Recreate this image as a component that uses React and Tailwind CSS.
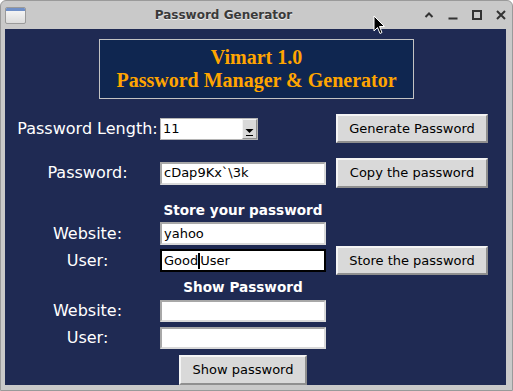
import React from "react";

const F = { fontFamily: '"DejaVu Sans", sans-serif' };

function Btn({ children, w = "w-[152px]", h = "h-[29px]" }) {
  return (
    <div
      className={`${w} ${h} bg-[#d9d9d9] border-2 border-t-[#f4f4f4] border-l-[#f4f4f4] border-r-[#8f8f8f] border-b-[#8f8f8f] flex items-center justify-center text-[13px] text-black`}
      style={F}
    >
      {children}
    </div>
  );
}

function Entry({ children, focused }) {
  return (
    <div
      className={`w-[166px] h-full bg-white flex items-center pl-[2px] text-[13px] text-black ${
        focused
          ? "border-2 border-black"
          : "border-2 border-t-[#a8a8a8] border-l-[#a8a8a8] border-r-[#d9d9d9] border-b-[#d9d9d9]"
      }`}
      style={F}
    >
      {children}
    </div>
  );
}

function Label({ children }) {
  return (
    <div className="w-[145px] flex justify-center text-[16px] text-white leading-none" style={F}>
      {children}
    </div>
  );
}

export default function App() {
  return (
    <div className="relative w-[513px] h-[391px] bg-[#c9c9c9] overflow-hidden flex flex-col rounded-t-[6px] border border-[#9a9a9a]">
      {/* title bar */}
      <div className="h-[28px] flex items-center shrink-0 relative">
        <div className="ml-[4px] w-[21px] h-[17px] mt-[1px] rounded-[2px] border border-[#9a9a9a] bg-gradient-to-b from-[#fafafa] to-[#dcdcdc] flex flex-col overflow-hidden">
          <div className="h-[3px] bg-[#6f8fc7]" />
        </div>
        <div className="w-[395px] flex justify-center">
          <span
            className="text-[12px] font-bold text-[#3a3a3a] [text-shadow:0_1px_0_rgba(255,255,255,0.7)]"
            style={F}
          >
            Password Generator
          </span>
        </div>
        <div className="flex items-center gap-[14px] ml-[3px]">
          <svg width="10" height="10" viewBox="0 0 10 10">
            <path d="M1.5 7 L5 3.5 L8.5 7" fill="none" stroke="#333" strokeWidth="2" />
          </svg>
          <svg width="10" height="10" viewBox="0 0 10 10">
            <path d="M0.5 8.5 H9.5" fill="none" stroke="#333" strokeWidth="2" />
          </svg>
          <svg width="10" height="10" viewBox="0 0 10 10">
            <rect x="1" y="1" width="8" height="8" fill="none" stroke="#333" strokeWidth="2" />
          </svg>
          <svg width="10" height="10" viewBox="0 0 10 10">
            <path d="M1 1 L9 9 M9 1 L1 9" fill="none" stroke="#333" strokeWidth="2" />
          </svg>
        </div>
      </div>

      {/* body */}
      <div className="flex-1 flex pl-[4px] pr-[6px] pb-[5px]">
        <div className="flex-1 bg-[#1f2a53] flex flex-col pl-[10px]">
          {/* header */}
          <div className="mt-[10px] ml-[84px] w-[315px] h-[60px] bg-[#0f2650] border border-[#c3c3c3] flex flex-col items-center justify-center">
            <div
              className="text-[20px] leading-[23px] font-bold text-[#ffa500]"
              style={{ fontFamily: '"Liberation Serif", serif' }}
            >
              Vimart 1.0
            </div>
            <div
              className="text-[20px] leading-[23px] font-bold text-[#ffa500]"
              style={{ fontFamily: '"Liberation Serif", serif' }}
            >
              Password Manager &amp; Generator
            </div>
          </div>

          {/* row 1 */}
          <div className="mt-[15px] h-[29px] flex items-center">
            <Label>Password Length:</Label>
            <div className="w-[166px] flex items-center">
              <div className="w-[98px] h-[22px] bg-white border border-[#b5b5b5] flex">
                <div className="flex-1 flex items-center pl-[2px] text-[13px] text-black" style={F}>
                  11
                </div>
                <div className="w-[15px] h-full bg-[#d9d9d9] border-l border-t border-t-[#f4f4f4] border-l-[#f4f4f4] border-r border-b border-r-[#8f8f8f] border-b-[#8f8f8f] flex items-end justify-center pb-[2px]">
                  <svg width="9" height="8" viewBox="0 0 9 8">
                    <path d="M0.5 1 H8.5 L4.5 5 Z" fill="#000" />
                    <path d="M1 7.5 H8" stroke="#000" strokeWidth="1" />
                  </svg>
                </div>
              </div>
            </div>
            <div className="ml-[10px]">
              <Btn>Generate Password</Btn>
            </div>
          </div>

          {/* row 2 */}
          <div className="mt-[15px] h-[30px] flex items-center">
            <Label>Password:</Label>
            <div className="h-[23px]">
              <Entry>cDap9Kx`\3k</Entry>
            </div>
            <div className="ml-[10px]">
              <Btn h="h-[30px]">Copy the password</Btn>
            </div>
          </div>

          {/* store header */}
          <div className="mt-[13px] h-[18px] flex items-center">
            <div className="w-[145px]" />
            <div className="w-[166px] flex justify-center text-[13.6px] font-bold text-white" style={F}>
              Store your password
            </div>
          </div>

          {/* website */}
          <div className="mt-[3px] h-[23px] flex items-center">
            <Label>Website:</Label>
            <div className="h-[23px]">
              <Entry>yahoo</Entry>
            </div>
          </div>

          {/* user */}
          <div className="mt-[1px] h-[29px] flex items-center">
            <Label>User:</Label>
            <div className="h-[23px]">
              <Entry focused>
                <span>Good</span>
                <span className="inline-block w-[2px] h-[16px] bg-black" />
                <span>User</span>
              </Entry>
            </div>
            <div className="ml-[10px]">
              <Btn>Store the password</Btn>
            </div>
          </div>

          {/* show header */}
          <div className="mt-[3px] h-[18px] flex items-center">
            <div className="w-[145px]" />
            <div className="w-[166px] flex justify-center text-[13.6px] font-bold text-white" style={F}>
              Show Password
            </div>
          </div>

          <div className="mt-[4px] h-[22px] flex items-center">
            <Label>Website:</Label>
            <div className="h-[22px]">
              <Entry />
            </div>
          </div>

          <div className="mt-[5px] h-[22px] flex items-center">
            <Label>User:</Label>
            <div className="h-[22px]">
              <Entry />
            </div>
          </div>

          <div className="mt-[6px] h-[30px] flex">
            <div className="w-[145px]" />
            <div className="w-[166px] flex justify-center">
              <Btn w="w-[128px]" h="h-[30px]">Show password</Btn>
            </div>
          </div>
        </div>
      </div>

      {/* mouse pointer */}
      <svg className="absolute left-[372px] top-[14px]" width="14" height="21" viewBox="0 0 14 21">
        <path
          d="M1 1 L1 16 L4.5 12.5 L7 18.5 L9 17.5 L6.5 11.5 L11.5 11.5 Z"
          fill="#000"
          stroke="#fff"
          strokeWidth="1"
        />
      </svg>
    </div>
  );
}
